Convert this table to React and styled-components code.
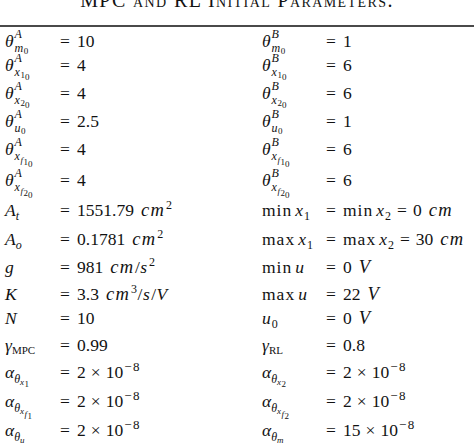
import React from "react";
import styled, { createGlobalStyle } from "styled-components";

const GlobalStyle = createGlobalStyle`
  html, body { margin: 0; padding: 0; background: #fff; }
  body {
    width: 474px;
    height: 443px;
    overflow: hidden;
    font-family: "Liberation Serif", "DejaVu Serif", serif;
    color: #121212;
  }
`;

const Page = styled.div`
  display: flex;
  flex-direction: column;
`;

const Caption = styled.div`
  margin-top: -10px;
  text-align: center;
  font-size: 20px;
  line-height: 20px;
  font-variant: small-caps;
  letter-spacing: 1.4px;
  white-space: nowrap;
`;

const Rule = styled.div`
  margin-top: 15px;
  height: 2px;
  background: #4a4a4a;
`;

const Table = styled.div`
  margin-top: 4px;
  padding-left: 5px;
  display: flex;
  flex-direction: column;
`;

const Row = styled.div`
  display: grid;
  grid-template-columns: 55px 17px 185px 64px 17px 1fr;
  height: ${(p) => p.$h}px;
  font-size: 17.5px;
  line-height: 20px;
  white-space: nowrap;
`;

const Cell = styled.div``;

const I = styled.span`
  font-style: italic;
  letter-spacing: ${(p) => p.$ls ?? 1}px;
`;

const Unit = styled.span`
  font-style: italic;
  font-size: 18.5px;
  letter-spacing: 1.3px;
  margin-left: 7px;
`;

const Slash = styled.span`
  font-style: normal;
  margin: 0 0.5px;
`;

const Up = styled.span`
  font-style: normal;
  letter-spacing: 1px;
  margin-right: 3px;
`;

const Sub = styled.span`
  font-size: ${(p) => p.$s || 12}px;
  vertical-align: ${(p) => -(p.$d ?? 4)}px;
  line-height: 0;
`;

const Sup = styled.span`
  font-size: ${(p) => p.$s || 12}px;
  vertical-align: ${(p) => p.$u ?? 7}px;
  letter-spacing: ${(p) => p.$ls ?? 0}px;
  line-height: 0;
  margin-left: 1px;
`;

const Stack = styled.span`
  display: inline-flex;
  flex-direction: column;
  vertical-align: 9px;
  font-size: 12px;
  line-height: 14px;
  margin: -8px 0 -8px 1px;
`;

const Op = styled.span`
  margin: 0 6px;
`;

const Bin = styled.span`
  margin: 0 5px;
`;

const ss = (c, d = 2) => (
  <Sub $s={9} $d={d}>
    {c}
  </Sub>
);

const Theta = ({ sup, children }) => (
  <>
    <I $ls={0}>θ</I>
    <Stack>
      <I $ls={0}>{sup}</I>
      <span>{children}</span>
    </Stack>
  </>
);

const xi = (n) => (
  <>
    <I $ls={0.5}>x</I>
    <Sub $s={9} $d={2}>
      {n}
      {ss(0, 1.5)}
    </Sub>
  </>
);

const xf = (n) => (
  <>
    <I $ls={0.5}>x</I>
    <Sub $s={9} $d={3}>
      <I $ls={0.5}>f</I>
      <Sub $s={9} $d={2}>
        {n}
        {ss(0, 1.5)}
      </Sub>
    </Sub>
  </>
);

const Alpha = ({ children }) => (
  <>
    <I $ls={0}>α</I>
    <Sub $s={12} $d={5}>
      <I $ls={0}>θ</I>
      {children}
    </Sub>
  </>
);

const cm = (p) => (
  <>
    <Unit>cm</Unit>
    {p && <Sup>{p}</Sup>}
  </>
);

const tenE8 = (m) => (
  <>
    {m}
    <Bin>×</Bin>10
    <Sup $s={13} $ls={1.5}>
      −8
    </Sup>
  </>
);

const Xs = (n) => (
  <>
    <I $ls={1}>x</I>
    <Sub>{n}</Sub>
  </>
);

const rows = [
  {
    h: 24,
    a: <Theta sup="A"><I $ls={0.5}>m</I>{ss(0, 1.5)}</Theta>,
    av: "10",
    b: <Theta sup="B"><I $ls={0.5}>m</I>{ss(0, 1.5)}</Theta>,
    bv: "1",
  },
  { h: 28, a: <Theta sup="A">{xi(1)}</Theta>, av: "4", b: <Theta sup="B">{xi(1)}</Theta>, bv: "6" },
  { h: 28, a: <Theta sup="A">{xi(2)}</Theta>, av: "4", b: <Theta sup="B">{xi(2)}</Theta>, bv: "6" },
  {
    h: 28,
    a: <Theta sup="A"><I $ls={0.5}>u</I>{ss(0, 1.5)}</Theta>,
    av: "2.5",
    b: <Theta sup="B"><I $ls={0.5}>u</I>{ss(0, 1.5)}</Theta>,
    bv: "1",
  },
  { h: 31, a: <Theta sup="A">{xf(1)}</Theta>, av: "4", b: <Theta sup="B">{xf(1)}</Theta>, bv: "6" },
  { h: 30, a: <Theta sup="A">{xf(2)}</Theta>, av: "4", b: <Theta sup="B">{xf(2)}</Theta>, bv: "6" },
  {
    h: 29,
    a: <><I $ls={0}>A</I><Sub><I>t</I></Sub></>,
    av: <>1551.79{cm("2")}</>,
    b: <><Up>min</Up>{Xs(1)}</>,
    bv: <><Up>min</Up>{Xs(2)}<Op>=</Op>0{cm()}</>,
  },
  {
    h: 28,
    a: <><I $ls={0}>A</I><Sub><I>o</I></Sub></>,
    av: <>0.1781{cm("2")}</>,
    b: <><Up>max</Up>{Xs(1)}</>,
    bv: <><Up>max</Up>{Xs(2)}<Op>=</Op>30{cm()}</>,
  },
  {
    h: 27,
    a: <I>g</I>,
    av: <>981{cm()}<Slash>/</Slash><I>s</I><Sup>2</Sup></>,
    b: <><Up>min</Up><I>u</I></>,
    bv: <>0<Unit>V</Unit></>,
  },
  {
    h: 24,
    a: <I>K</I>,
    av: <>3.3{cm("3")}<Slash>/</Slash><I>s</I><Slash>/</Slash><I>V</I></>,
    b: <><Up>max</Up><I>u</I></>,
    bv: <>22<Unit>V</Unit></>,
  },
  {
    h: 27,
    a: <I>N</I>,
    av: "10",
    b: <><I>u</I><Sub>0</Sub></>,
    bv: <>0<Unit>V</Unit></>,
  },
  {
    h: 27,
    a: <><I $ls={0}>γ</I><Sub $d={3} $s={11}>MPC</Sub></>,
    av: "0.99",
    b: <><I $ls={0}>γ</I><Sub $d={3} $s={11}>RL</Sub></>,
    bv: "0.8",
  },
  {
    h: 29,
    a: <Alpha><Sub $s={9} $d={2}><I $ls={0.5}>x</I>{ss(1)}</Sub></Alpha>,
    av: tenE8("2"),
    b: <Alpha><Sub $s={9} $d={2}><I $ls={0.5}>x</I>{ss(2)}</Sub></Alpha>,
    bv: tenE8("2"),
  },
  {
    h: 29,
    a: <Alpha><Sub $s={9} $d={2}><I $ls={0.5}>x</I><Sub $s={9} $d={3}><I $ls={0.5}>f</I>{ss(1)}</Sub></Sub></Alpha>,
    av: tenE8("2"),
    b: <Alpha><Sub $s={9} $d={2}><I $ls={0.5}>x</I><Sub $s={9} $d={3}><I $ls={0.5}>f</I>{ss(2)}</Sub></Sub></Alpha>,
    bv: tenE8("2"),
  },
  {
    h: 24,
    a: <Alpha><Sub $s={9} $d={2}><I>u</I></Sub></Alpha>,
    av: tenE8("2"),
    b: <Alpha><Sub $s={9} $d={2}><I>m</I></Sub></Alpha>,
    bv: tenE8("15"),
  },
];

export default function App() {
  return (
    <Page>
      <GlobalStyle />
      <Caption>MPC and RL Initial Parameters.</Caption>
      <Rule />
      <Table>
        {rows.map((r, i) => (
          <Row key={i} $h={r.h}>
            <Cell>{r.a}</Cell>
            <Cell>=</Cell>
            <Cell>{r.av}</Cell>
            <Cell>{r.b}</Cell>
            <Cell>=</Cell>
            <Cell>{r.bv}</Cell>
          </Row>
        ))}
      </Table>
    </Page>
  );
}
